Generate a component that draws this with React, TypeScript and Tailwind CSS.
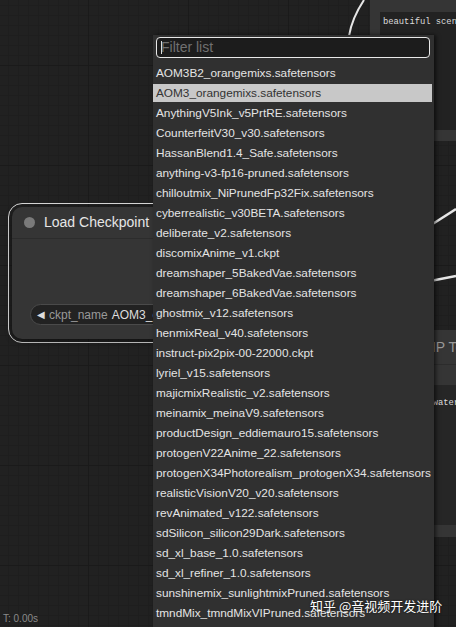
import React from 'react';

const models = [
  'AOM3B2_orangemixs.safetensors',
  'AOM3_orangemixs.safetensors',
  'AnythingV5Ink_v5PrtRE.safetensors',
  'CounterfeitV30_v30.safetensors',
  'HassanBlend1.4_Safe.safetensors',
  'anything-v3-fp16-pruned.safetensors',
  'chilloutmix_NiPrunedFp32Fix.safetensors',
  'cyberrealistic_v30BETA.safetensors',
  'deliberate_v2.safetensors',
  'discomixAnime_v1.ckpt',
  'dreamshaper_5BakedVae.safetensors',
  'dreamshaper_6BakedVae.safetensors',
  'ghostmix_v12.safetensors',
  'henmixReal_v40.safetensors',
  'instruct-pix2pix-00-22000.ckpt',
  'lyriel_v15.safetensors',
  'majicmixRealistic_v2.safetensors',
  'meinamix_meinaV9.safetensors',
  'productDesign_eddiemauro15.safetensors',
  'protogenV22Anime_22.safetensors',
  'protogenX34Photorealism_protogenX34.safetensors',
  'realisticVisionV20_v20.safetensors',
  'revAnimated_v122.safetensors',
  'sdSilicon_silicon29Dark.safetensors',
  'sd_xl_base_1.0.safetensors',
  'sd_xl_refiner_1.0.safetensors',
  'sunshinemix_sunlightmixPruned.safetensors',
  'tmndMix_tmndMixVIPruned.safetensors',
];

const selected = 'AOM3_orangemixs.safetensors';

function Links() {
  return (
    <svg className="absolute inset-0 pointer-events-none" width="456" height="627">
      <path d="M364 0 C 356 12, 351 24, 349 36" stroke="#e6e6e6" strokeWidth="2" fill="none" />
      <path d="M420 232 L 456 209" stroke="#e6e6e6" strokeWidth="2.5" fill="none" />
      <path d="M420 283 L 456 276" stroke="#e6e6e6" strokeWidth="2.5" fill="none" />
    </svg>
  );
}

function LoadCheckpoint() {
  return (
    <div className="absolute left-[8px] top-[203px] w-[200px] h-[140px] rounded-[14px] border-[1.5px] border-[#d9d9d9] p-[3px]">
      <div className="h-full rounded-[10px] bg-[#353535] flex flex-col shadow-[0_2px_6px_rgba(0,0,0,0.5)]">
        <div className="h-[32px] flex items-center gap-[9px] pl-[12px] border-b border-[#2c2c2c]">
          <span className="w-[11px] h-[11px] rounded-full bg-[#7a7a7a]" />
          <span className="text-[14px] text-[#e6e6e6]">Load Checkpoint</span>
        </div>
        <div className="flex-1 flex flex-col justify-end pb-[14px] pl-[18px]">
          <div className="h-[21px] rounded-full bg-[#222] border border-[#4a4a4a] flex items-center pl-[6px] gap-[4px] text-[12px]">
            <span className="text-[#ddd] text-[10px]">◀</span>
            <span className="text-[#999]">ckpt_name</span>
            <span className="text-[#ddd]">AOM3_orangemixs.safetensors</span>
          </div>
        </div>
      </div>
    </div>
  );
}

function PromptNodeTop() {
  return (
    <div className="absolute left-[370px] top-[-40px] w-[120px] h-[181px] bg-[#353535] rounded-[8px] pt-[52px] pl-[10px]">
      <div className="h-[118px] bg-[#222] pt-[4px] pl-[3px] font-['Liberation_Mono',monospace] text-[8.8px] text-[#dcdcdc] whitespace-nowrap">
        beautiful scenery nature glass bottle
      </div>
    </div>
  );
}

function PromptNodeMid() {
  return (
    <div className="absolute left-[380px] top-[330px] w-[120px] h-[207px] bg-[#353535] rounded-[8px] flex flex-col">
      <div className="h-[35px] flex items-center pl-[34px] text-[14px] text-[#999] border-b border-[#2c2c2c] whitespace-nowrap">
        CLIP Text Encode (Prompt)
      </div>
      <div className="ml-[10px] mt-[20px] h-[140px] bg-[#262626] pt-[12px] pl-[11px] font-['Liberation_Mono',monospace] text-[8.8px] text-[#dcdcdc] whitespace-nowrap">
        text, watermark
      </div>
    </div>
  );
}

function FilterMenu() {
  return (
    <div className="absolute left-[153px] top-[35px] w-[281px] h-[600px] bg-[#303030] shadow-[2px_0_4px_rgba(0,0,0,0.6)] font-['Liberation_Sans',Arial,sans-serif]">
      <div className="pt-[2px] pl-[3px]">
        <div className="relative w-[274px] h-[21px] rounded-[4px] border border-[#e8e8e8] bg-[#1c1c1c] flex items-center pl-[4px] text-[14px] text-[#707070]">
          <span className="absolute left-[4px] top-[3px] w-px h-[13px] bg-[#ddd]" />
          Filter list
        </div>
      </div>
      <div className="mt-[5px] flex flex-col">
        {models.map((m) =>
          m === selected ? (
            <div key={m} className="h-[18px] my-[1px] mr-[2px] bg-[#c8c8c8] text-[#333] pl-[3px] leading-[18px] text-[11.8px] whitespace-nowrap">
              {m}
            </div>
          ) : (
            <div key={m} className="h-[20px] text-[#e4e4e4] pl-[3px] leading-[20px] text-[11.8px] whitespace-nowrap">
              {m}
            </div>
          )
        )}
      </div>
    </div>
  );
}

export default function App() {
  return (
    <div className="relative w-[456px] h-[627px] overflow-hidden bg-[#212121] [background-image:linear-gradient(to_right,#1a1a1a_1px,transparent_1px),linear-gradient(to_bottom,#1a1a1a_1px,transparent_1px),linear-gradient(to_right,#1e1e1e_1px,transparent_1px),linear-gradient(to_bottom,#1e1e1e_1px,transparent_1px)] [background-size:100px_100px,100px_100px,10px_10px,10px_10px] [background-position:88px_65px,88px_65px,8px_5px,8px_5px] font-['Liberation_Sans',Arial,sans-serif]">
      <PromptNodeTop />
      <PromptNodeMid />
      <Links />
      <LoadCheckpoint />
      <FilterMenu />
      <div className="absolute left-[3px] top-[611px] text-[10px] text-[#8a8a8a]">T: 0.00s</div>
      <div className="absolute left-[310px] top-[596px] text-[13px] text-white font-['Noto_Sans_CJK_SC',sans-serif] [text-shadow:0_0_2px_rgba(0,0,0,0.8)] whitespace-nowrap">
        知乎 @音视频开发进阶
      </div>
    </div>
  );
}
